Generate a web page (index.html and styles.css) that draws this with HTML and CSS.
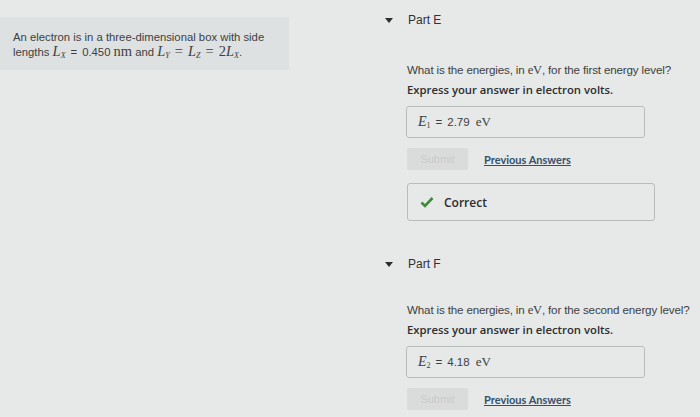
FILE: index.html
```html
<!DOCTYPE html>
<html lang="en">
<head>
    <meta charset="UTF-8">
    <title>Part E / Part F</title>
    <link rel="stylesheet" href="styles.css">
</head>
<body>
    <div class="page">
        <div class="intro">
            <p>An electron is in a three-dimensional box with side<br>lengths <span class="m"><i>L</i><sub><i>X</i></sub></span><span class="op">=</span>0.450 <span class="m">nm</span> and <span class="m"><i>L</i><sub><i>Y</i></sub><span class="op">=</span><i>L</i><sub><i>Z</i></sub><span class="op">=</span>2<i>L</i><sub><i>X</i></sub></span>.</p>
        </div>

        <div class="parts">
            <div class="part">
                <div class="part-head"><span class="caret"></span>Part E</div>
                <p class="question">What is the energies, in <span class="m">eV</span>, for the first energy level?</p>
                <p class="express">Express your answer in electron volts.</p>
                <div class="answer-box">
                    <span class="m var"><i>E</i><sub>1</sub></span><span class="eq">=</span><span class="num">2.79</span><span class="m unit">eV</span>
                </div>
                <div class="actions">
                    <button class="submit">Submit</button>
                    <a href="#" class="prev">Previous Answers</a>
                </div>
                <div class="correct">
                    <svg width="14" height="12" viewBox="0 0 14 12"><path d="M1.5 6.5 L5 10 L12.5 2" fill="none" stroke="#3f8a3a" stroke-width="2.6"/></svg>
                    Correct
                </div>
            </div>

            <div class="part part-f">
                <div class="part-head"><span class="caret"></span>Part F</div>
                <p class="question">What is the energies, in <span class="m">eV</span>, for the second energy level?</p>
                <p class="express">Express your answer in electron volts.</p>
                <div class="answer-box">
                    <span class="m var"><i>E</i><sub>2</sub></span><span class="eq">=</span><span class="num">4.18</span><span class="m unit">eV</span>
                </div>
                <div class="actions">
                    <button class="submit">Submit</button>
                    <a href="#" class="prev">Previous Answers</a>
                </div>
            </div>
        </div>
    </div>
</body>
</html>
```

FILE: styles.css
```css
/* General */
body {
    margin: 0;
    padding: 0;
    background-color: #e7e8e8;
    font-family: 'Liberation Sans', Arial, sans-serif;
    color: #3d3f41;
    overflow: hidden;
}

.page {
    display: flex;
    align-items: flex-start;
    padding-top: 17px;
}

/* Problem statement */
.intro {
    width: 276px;
    height: 53px;
    padding-left: 13px;
    background-color: #dde1e1;
}

.intro p {
    margin: 13px 0 0;
    font-size: 11.3px;
    line-height: 14px;
    white-space: nowrap;
}

.m {
    font-family: 'Liberation Serif', 'Times New Roman', serif;
    font-size: 12.5px;
}

.intro .m {
    font-size: 14.5px;
}

.m sub {
    font-size: 8px;
    line-height: 0;
    vertical-align: -2px;
}

.op {
    margin: 0 5px;
}

/* Parts */
.parts {
    margin-left: 91px;
    margin-top: -2px;
    width: 310px;
}

.part-head {
    display: flex;
    align-items: center;
    font-size: 12px;
    color: #2f3133;
    height: 10px;
}

.caret {
    width: 0;
    height: 0;
    border-left: 4px solid transparent;
    border-right: 4px solid transparent;
    border-top: 5px solid #2b2d2f;
    margin-left: 5px;
    margin-right: 15px;
}

.question {
    margin: 38px 0 0 27px;
    font-size: 11.6px;
    line-height: 14px;
    letter-spacing: -0.15px;
    white-space: nowrap;
}

.express {
    margin: 6px 0 0 27px;
    font-family: 'Open Sans', sans-serif;
    font-weight: 600;
    font-size: 11.3px;
    line-height: 14px;
    color: #2c2e30;
    white-space: nowrap;
}

.answer-box {
    box-sizing: border-box;
    margin: 9px 0 0 26px;
    width: 239px;
    height: 32px;
    padding-left: 11px;
    border: 1px solid #b9bcbd;
    border-radius: 3px;
    display: flex;
    align-items: center;
    font-size: 11.5px;
}

.answer-box .var {
    font-size: 14px;
}

.answer-box .eq {
    margin-left: 5px;
}

.answer-box .num {
    margin-left: 5px;
}

.answer-box .unit {
    margin-left: 6px;
    font-size: 13px;
}

.actions {
    display: flex;
    align-items: center;
    margin: 10px 0 0 27px;
    gap: 16px;
}

.submit {
    width: 61px;
    height: 22px;
    border: none;
    border-radius: 2px;
    background-color: #dadcdc;
    color: #c9cbcb;
    font-family: 'Liberation Sans', sans-serif;
    font-size: 11px;
}

.prev {
    font-family: 'Lato', sans-serif;
    font-weight: 700;
    font-size: 11px;
    color: #34506c;
    text-decoration: underline;
    margin-top: 1px;
}

.correct {
    box-sizing: border-box;
    margin: 13px 0 0 27px;
    width: 248px;
    height: 38px;
    padding-left: 12px;
    border: 1px solid #b9bcbd;
    border-radius: 3px;
    display: flex;
    align-items: center;
    gap: 10px;
    font-family: 'Open Sans', sans-serif;
    font-weight: 600;
    font-size: 12px;
    color: #2a2c2e;
}

.part-f {
    margin-top: 38px;
}

.part-f .question {
    margin-top: 34px;
}
```
